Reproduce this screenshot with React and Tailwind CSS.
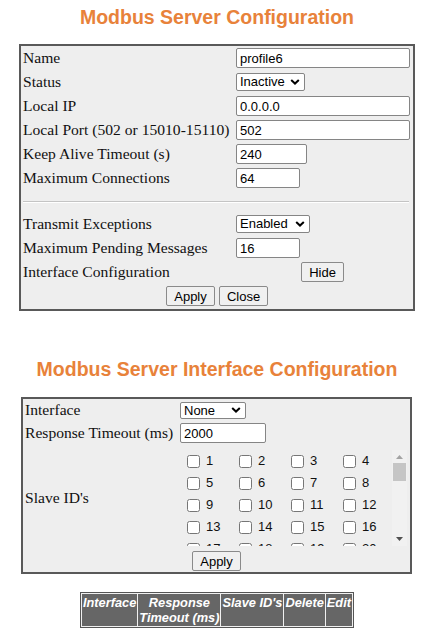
import React from 'react'

const serif = "font-['Liberation_Serif','Times_New_Roman',serif]"
const sans = "font-['Liberation_Sans',Arial,sans-serif]"

const slaveIds = Array.from({ length: 64 }, (_, i) => i + 1)

const TextBox = ({ value, width }) => (
    <input
        type="text"
        defaultValue={value}
        className={`h-[20px] ${width} rounded-[2px] border border-[#858585] bg-white px-[3px] text-[13px] text-black outline-none ${sans}`}
    />
)

const Dropdown = ({ value, options, width, leading = 'leading-[16px]' }) => (
    <div className={`relative flex ${width}`}>
        <select
            defaultValue={value}
            className={`block w-full appearance-none rounded-[2px] border border-[#858585] bg-white py-0 pl-[3px] text-[13px] ${leading} text-black outline-none ${sans}`}
        >
            {options.map(o => <option key={o}>{o}</option>)}
        </select>
        <svg className="pointer-events-none absolute right-[5px] top-1/2 -translate-y-1/2" width="10" height="7" viewBox="0 0 10 7">
            <path d="M1.2 1.4l3.8 3.6l3.8-3.6" fill="none" stroke="#000" strokeWidth="2" />
        </svg>
    </div>
)

const Btn = ({ children, width }) => (
    <button
        type="button"
        className={`h-[20px] ${width} rounded-[2px] border border-[#8a8a8a] bg-[#f0f0f0] text-[13px] text-black ${sans}`}
    >{children}</button>
)

const Row = ({ label, labelW, h = 'h-[24px]', children, right = 'items-center' }) => (
    <div className={`flex ${h} items-center`}>
        <div className={`${labelW} shrink-0 whitespace-nowrap pl-[2px] text-[15.6px] text-[#111] ${serif}`}>{label}</div>
        <div className={`flex flex-1 ${right}`}>{children}</div>
    </div>
)

const Title = ({ children, className }) => (
    <h2 className={`text-center text-[19.5px] font-bold leading-[22px] text-[#e8823a] ${sans} ${className}`}>{children}</h2>
)

export default function App() {
    return (
        <div className="min-h-[636px] bg-white">
            <div className="ml-[19px] w-[396px]">
                <Title className="pt-[6px] pb-[16px]">Modbus Server Configuration</Title>

                {/* server settings */}
                <div className="w-[396px] border-2 border-[#595959] bg-[#eeeeee] pb-[1px]">
                    <Row label="Name" labelW="w-[215px]"><TextBox value="profile6" width="w-[174px]" /></Row>
                    <Row label="Status" labelW="w-[215px]">
                        <Dropdown value="Inactive" options={['Active', 'Inactive']} width="w-[69px]" />
                    </Row>
                    <Row label="Local IP" labelW="w-[215px]"><TextBox value="0.0.0.0" width="w-[174px]" /></Row>
                    <Row label="Local Port (502 or 15010-15110)" labelW="w-[215px]"><TextBox value="502" width="w-[174px]" /></Row>
                    <Row label="Keep Alive Timeout (s)" labelW="w-[215px]"><TextBox value="240" width="w-[71px]" /></Row>
                    <Row label="Maximum Connections" labelW="w-[215px]"><TextBox value="64" width="w-[64px]" /></Row>

                    <div className="mt-[11px] mb-[9px] ml-[2px] mr-[4px] border-t border-b border-t-[#c4c4c4] border-b-white" />

                    <Row label="Transmit Exceptions" labelW="w-[215px]">
                        <Dropdown value="Enabled" options={['Enabled', 'Disabled']} width="w-[74px]" />
                    </Row>
                    <Row label="Maximum Pending Messages" labelW="w-[215px]"><TextBox value="16" width="w-[64px]" /></Row>
                    <Row label="Interface Configuration" labelW="w-[215px]" right="justify-center pr-[4px]">
                        <Btn width="w-[43px]">Hide</Btn>
                    </Row>
                    <div className="flex h-[24px] items-center justify-center gap-[4px]">
                        <Btn width="w-[49px]">Apply</Btn>
                        <Btn width="w-[49px]">Close</Btn>
                    </div>
                </div>

                <Title className="mt-[47px] mb-[17px]">Modbus Server Interface Configuration</Title>

                {/* interface settings */}
                <div className="ml-[2px] w-[391px] border-2 border-[#595959] bg-[#eeeeee] pb-[1px]">
                    <Row label="Interface" labelW="w-[157px]" h="h-[22px]">
                        <Dropdown value="None" options={['None', 'ETH1', 'ETH2']} width="w-[66px]" leading="leading-[15px]" />
                    </Row>
                    <Row label="Response Timeout (ms)" labelW="w-[157px]"><TextBox value="2000" width="w-[86px]" /></Row>
                    <div className="mt-[5px] flex h-[96px] items-center">
                        <div className={`w-[157px] shrink-0 pl-[2px] text-[15.6px] text-[#111] ${serif}`}>Slave ID's</div>
                        <div className="flex h-[96px] w-[228px]">
                            <div className="h-full w-[212px] overflow-hidden">
                                <div className="grid grid-cols-[52px_52px_52px_45px] pl-[7px]">
                                    {slaveIds.map(id => (
                                        <label key={id} className={`flex h-[22px] items-center text-[13px] text-[#111] ${sans}`}>
                                            <input type="checkbox" className="m-0 h-[13px] w-[13px]" />
                                            <span className="ml-[6px]">{id}</span>
                                        </label>
                                    ))}
                                </div>
                            </div>
                            {/* scrollbar */}
                            <div className="flex h-full w-[15px] flex-col items-center bg-[#f1f1f1]">
                                <div className="flex h-[13px] items-center">
                                    <svg width="7" height="4" viewBox="0 0 7 4"><path d="M0 4L3.5 0L7 4z" fill="#a3a3a3" /></svg>
                                </div>
                                <div className="h-[18px] w-[13px] bg-[#c5c5c5]" />
                                <div className="flex-1" />
                                <div className="flex h-[14px] items-center">
                                    <svg width="7" height="4" viewBox="0 0 7 4"><path d="M0 0L3.5 4L7 0z" fill="#505050" /></svg>
                                </div>
                            </div>
                        </div>
                    </div>
                    <div className="mt-[5px] flex justify-center">
                        <Btn width="w-[49px]">Apply</Btn>
                    </div>
                </div>

                {/* configured interfaces */}
                <table className={`mx-auto mt-[18px] border-separate border-spacing-px border border-[#555] bg-[#f0f0f0] text-[12.8px] leading-[15px] ${sans}`}>
                    <thead>
                        <tr>
                            {['Interface', 'Response|Timeout (ms)', "Slave ID's", 'Delete', 'Edit'].map(h => (
                                <th key={h} className="bg-[#666] px-px py-px align-top font-bold italic text-white">
                                    {h.split('|').map((t, i) => <div key={i}>{t}</div>)}
                                </th>
                            ))}
                        </tr>
                    </thead>
                </table>
            </div>
        </div>
    )
}
